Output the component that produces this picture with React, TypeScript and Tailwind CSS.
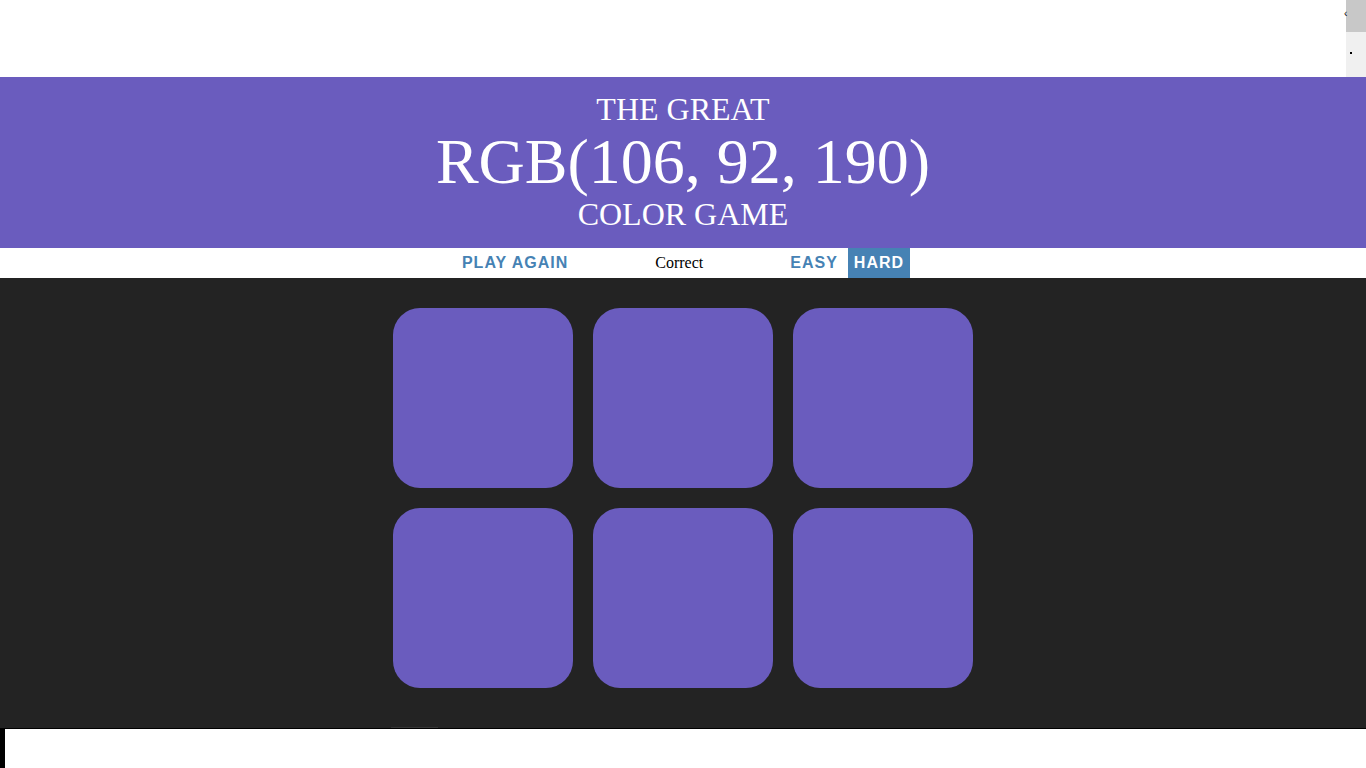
import React, { useState } from "react";

const answer = { r: 106, g: 92, b: 190 };

export default function App() {
    const [mode, setMode] = useState<"easy" | "hard">("hard");
    const colors = Array.from({ length: 6 }, () => `rgb(${answer.r}, ${answer.g}, ${answer.b})`);

    return (
        <div className="relative flex flex-col h-screen bg-white overflow-hidden">
            {/* top gap + side widget */}
            <div className="h-[77px] bg-white" />
            <div className="absolute top-0 right-0 w-[20px] h-[77px] flex flex-col">
                <div className="h-[32px] bg-[#c8c8c8] relative">
                    <span className="absolute left-[-2px] top-[9px] text-[10px] leading-none text-black font-['Liberation_Sans',sans-serif]">‹</span>
                </div>
                <div className="flex-1 bg-[#f0f0f0] flex justify-start pl-[4px] pt-[20px]">
                    <div className="w-[2px] h-[2px] bg-black" />
                </div>
            </div>

            {/* Header */}
            <h1 className="flex flex-col items-center bg-[#6a5cbe] text-white font-normal font-['Liberation_Serif',serif] pt-[15px] pb-[16px] uppercase">
                <div className="text-[32px] leading-[35px]">The Great</div>
                <div className="text-[64px] leading-[70px]">RGB({answer.r}, {answer.g}, {answer.b})</div>
                <div className="text-[32px] leading-[35px]">Color Game</div>
            </h1>

            {/* Stripe */}
            <div className="h-[30px] bg-white flex justify-center gap-[4px]">
                <button className="h-full px-[6px] uppercase font-bold tracking-[1px] text-[16px] text-[#4682b4] font-['Liberation_Sans',sans-serif]">
                    Play Again
                </button>
                <span className="w-[202px] flex items-center justify-center text-[16px] text-black font-['Liberation_Serif',serif]">
                    Correct
                </span>
                <button
                    onClick={() => setMode("easy")}
                    className={
                        mode === "easy"
                            ? "h-full px-[6px] uppercase font-bold tracking-[1px] text-[16px] bg-[#4682b4] text-white font-['Liberation_Sans',sans-serif]"
                            : "h-full px-[6px] uppercase font-bold tracking-[1px] text-[16px] text-[#4682b4] font-['Liberation_Sans',sans-serif]"
                    }
                >
                    Easy
                </button>
                <button
                    onClick={() => setMode("hard")}
                    className={
                        mode === "hard"
                            ? "h-full px-[6px] uppercase font-bold tracking-[1px] text-[16px] bg-[#4682b4] text-white font-['Liberation_Sans',sans-serif]"
                            : "h-full px-[6px] uppercase font-bold tracking-[1px] text-[16px] text-[#4682b4] font-['Liberation_Sans',sans-serif]"
                    }
                >
                    Hard
                </button>
            </div>

            {/* Board */}
            <div className="h-[450px] bg-[#232323] flex flex-col">
                <div className="w-[600px] mx-auto mt-[20px] grid grid-cols-3">
                    {colors.map((c, i) => (
                        <div key={i} className="m-[10px] w-[180px] h-[180px] rounded-[27px]" style={{ backgroundColor: c }} />
                    ))}
                </div>
                <div className="mt-auto ml-[391px] w-[47px] h-[1px] bg-[#363636]" />
            </div>

            {/* Footer */}
            <div className="flex-1 flex border-t border-black">
                <div className="w-[5px] bg-black" />
                <div className="flex-1 bg-white" />
            </div>
        </div>
    );
}
